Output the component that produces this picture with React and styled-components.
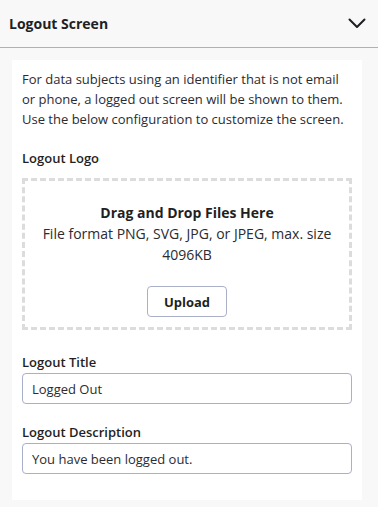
import React from "react";
import styled, { createGlobalStyle } from "styled-components";

const Global = createGlobalStyle`
  html, body { margin: 0; padding: 0; background: #f8f8f9; }
  body { font-family: "Open Sans", "Noto Sans", sans-serif; color: #1f1f24; }
  * { box-sizing: border-box; }
`;

const Header = styled.div`
  height: 48px;
  display: flex;
  align-items: center;
  justify-content: space-between;
  padding: 0 12px 0 9px;
  border-bottom: 1px solid #a9b0c8;
`;

const HeaderTitle = styled.div`
  font-size: 14px;
  font-weight: 700;
  line-height: 20px;
  padding-top: 1px;
`;

const Panel = styled.div`
  margin: 12px 16px 0 12px;
  background: #ffffff;
  padding: 9px 10px 26px 10px;
  display: flex;
  flex-direction: column;
`;

const Intro = styled.p`
  margin: 0;
  font-size: 13px;
  line-height: 20px;
  color: #2b2b30;
`;

const Label = styled.div`
  font-size: 13px;
  font-weight: 600;
  line-height: 20px;
  margin-top: ${(p) => p.$mt}px;
  margin-bottom: ${(p) => p.$mb}px;
`;

const Drop = styled.div`
  border: 3px dashed #dcdcdc;
  height: 152px;
  padding: 21px 10px 10px;
  display: flex;
  flex-direction: column;
  align-items: center;
  text-align: center;
`;

const DropTitle = styled.div`
  font-size: 14px;
  font-weight: 700;
  line-height: 21px;
`;

const DropText = styled.div`
  font-size: 14px;
  line-height: 21px;
  color: #2b2b30;
`;

const Button = styled.button`
  margin-top: 21px;
  width: 80px;
  height: 31px;
  border: 1px solid #a9b0c8;
  border-radius: 4px;
  background: #fff;
  font-family: inherit;
  font-size: 13px;
  font-weight: 700;
  color: #1f1f24;
  padding: 0;
`;

const Input = styled.input`
  width: 100%;
  height: 31px;
  border: 1px solid #a9b0c8;
  border-radius: 4px;
  padding: 0 9px;
  font-family: inherit;
  font-size: 13px;
  color: #2b2b30;
  background: #fff;
  outline: none;
`;

const Chevron = () => (
  <svg width="18" height="11" viewBox="0 0 18 11" fill="none">
    <path d="M1.5 1.5 L9 9 L16.5 1.5" stroke="#1f1f24" strokeWidth="2" strokeLinecap="round" strokeLinejoin="round" />
  </svg>
);

export default function App() {
  return (
    <>
      <Global />
      <Header>
        <HeaderTitle>Logout Screen</HeaderTitle>
        <Chevron />
      </Header>
      <Panel>
        <Intro>
          For data subjects using an identifier that is not email or phone, a logged out screen will be shown to them. Use the below configuration to customize the screen.
        </Intro>
        <Label $mt={19} $mb={10}>Logout Logo</Label>
        <Drop>
          <DropTitle>Drag and Drop Files Here</DropTitle>
          <DropText>File format PNG, SVG, JPG, or JPEG, max. size 4096KB</DropText>
          <Button>Upload</Button>
        </Drop>
        <Label $mt={22} $mb={1}>Logout Title</Label>
        <Input defaultValue="Logged Out" />
        <Label $mt={18} $mb={1}>Logout Description</Label>
        <Input defaultValue="You have been logged out." />
      </Panel>
    </>
  );
}
